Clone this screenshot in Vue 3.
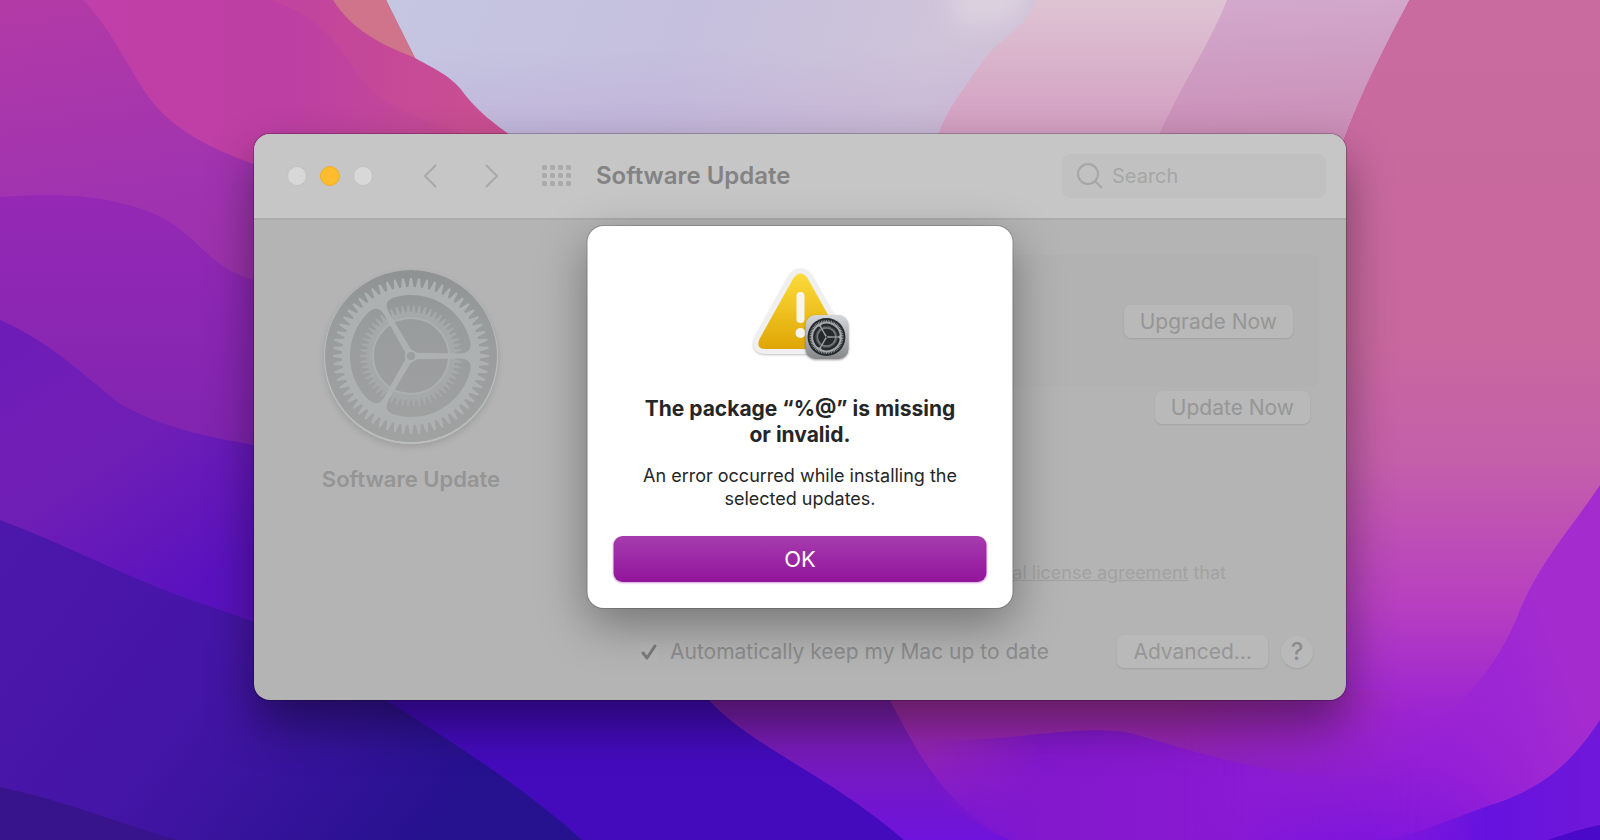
<script setup>
import { ref } from 'vue'

const query = ref('')
const autoUpdate = ref(true)

const polar = (r, deg) => {
  const a = (deg * Math.PI) / 180
  return `${(r * Math.cos(a)).toFixed(2)} ${(r * Math.sin(a)).toFixed(2)}`
}

function toothedRing(count, root, tip) {
  const step = 360 / count
  let d = ''
  for (let i = 0; i < count; i++) {
    const a = i * step
    d += `${i ? 'L' : 'M'}${polar(root, a - step * 0.36)}L${polar(tip, a - step * 0.12)}L${polar(tip, a + step * 0.12)}L${polar(root, a + step * 0.36)}`
  }
  return d + 'Z'
}

const circle = (r) => `M${r} 0A${r} ${r} 0 1 0 ${-r} 0A${r} ${r} 0 1 0 ${r} 0Z`

function opening(rot) {
  const p = (r, a) => polar(r, a + rot)
  return (
    `M${p(7, -28)}L${p(50, -3)}Q${p(61, -3)} ${p(61, -13)}` +
    `A61 61 0 0 0 ${p(61, -107)}Q${p(61, -117)} ${p(50, -117)}L${p(7, -92)}Z`
  )
}

const openings = [0, 120, 240].map(opening).join('')
const wheel = toothedRing(60, 69, 78) + openings
const cog = toothedRing(54, 44, 51) + circle(38)
</script>

<template>
  <div class="desktop">
    <svg class="wallpaper" viewBox="0 0 1600 840" preserveAspectRatio="none" aria-hidden="true">
      <defs>
        <linearGradient id="sky" x1="0" y1="0" x2="1" y2="0.1">
          <stop offset="0" stop-color="#c5c6e2" /><stop offset=".3" stop-color="#c5c0de" />
          <stop offset=".55" stop-color="#cfc4d9" /><stop offset="1" stop-color="#d2b4cf" />
        </linearGradient>
        <linearGradient id="skyLow" x1="0" y1="0" x2="0" y2="1">
          <stop offset=".3" stop-color="#b898cc" stop-opacity="0" /><stop offset="1" stop-color="#b898cc" stop-opacity=".4" />
        </linearGradient>
        <linearGradient id="veil" x1="0" y1="0" x2="0" y2="1">
          <stop offset="0" stop-color="#dec4d3" /><stop offset="1" stop-color="#d29cc0" />
        </linearGradient>
        <linearGradient id="veil2" x1="0.4" y1="0" x2="0.5" y2="1">
          <stop offset="0" stop-color="#d2a9cc" /><stop offset="1" stop-color="#ca8db6" />
        </linearGradient>
        <linearGradient id="rose" x1="0" y1="0" x2="0" y2="840" gradientUnits="userSpaceOnUse">
          <stop offset="0" stop-color="#c96b9f" /><stop offset=".4" stop-color="#c8689e" />
          <stop offset=".55" stop-color="#c45faa" /><stop offset=".72" stop-color="#b73fc0" />
          <stop offset=".85" stop-color="#9c24d2" /><stop offset="1" stop-color="#8417dc" />
        </linearGradient>
        <linearGradient id="magenta" x1="100" y1="60" x2="480" y2="60" gradientUnits="userSpaceOnUse">
          <stop offset="0" stop-color="#c03fa8" /><stop offset=".5" stop-color="#bd3fa3" /><stop offset="1" stop-color="#c74d92" />
        </linearGradient>
        <linearGradient id="plum" x1="0" y1="0" x2="60" y2="460" gradientUnits="userSpaceOnUse">
          <stop offset="0" stop-color="#b23aa6" /><stop offset=".45" stop-color="#a033b0" /><stop offset="1" stop-color="#9430a4" />
        </linearGradient>
        <linearGradient id="violet" x1="0" y1="195" x2="0" y2="450" gradientUnits="userSpaceOnUse">
          <stop offset="0" stop-color="#9529b5" /><stop offset="1" stop-color="#8024b0" />
        </linearGradient>
        <linearGradient id="indigo" x1="0" y1="330" x2="180" y2="600" gradientUnits="userSpaceOnUse">
          <stop offset="0" stop-color="#6e1cb8" /><stop offset=".5" stop-color="#701fb5" /><stop offset="1" stop-color="#5a12bf" />
        </linearGradient>
        <linearGradient id="deep" x1="0" y1="520" x2="420" y2="840" gradientUnits="userSpaceOnUse">
          <stop offset="0" stop-color="#4d17ac" /><stop offset=".5" stop-color="#4415a6" /><stop offset="1" stop-color="#26118f" />
        </linearGradient>
        <linearGradient id="grape" x1="0" y1="700" x2="0" y2="840" gradientUnits="userSpaceOnUse">
          <stop offset="0" stop-color="#7c1fa8" /><stop offset="1" stop-color="#6f13dc" />
        </linearGradient>
        <linearGradient id="orchid" x1="0" y1="700" x2="0" y2="840" gradientUnits="userSpaceOnUse">
          <stop offset="0" stop-color="#a42ea6" /><stop offset=".5" stop-color="#8c20be" /><stop offset="1" stop-color="#7014de" />
        </linearGradient>
        <linearGradient id="wave" x1="930" y1="0" x2="1380" y2="0" gradientUnits="userSpaceOnUse">
          <stop offset="0" stop-color="#8318cc" stop-opacity="0" /><stop offset=".25" stop-color="#8318cc" />
          <stop offset=".7" stop-color="#8a1ad2" /><stop offset="1" stop-color="#8c1ad6" stop-opacity="0" />
        </linearGradient>
        <linearGradient id="fade" x1="1180" y1="0" x2="1420" y2="0" gradientUnits="userSpaceOnUse">
          <stop offset="0" stop-color="#fff" /><stop offset="1" stop-color="#000" />
        </linearGradient>
        <mask id="fadeRight" maskUnits="userSpaceOnUse" x="860" y="680" width="740" height="160">
          <rect x="860" y="680" width="740" height="160" fill="url(#fade)" />
        </mask>
        <linearGradient id="lilac" x1="1400" y1="700" x2="1560" y2="640" gradientUnits="userSpaceOnUse">
          <stop offset="0" stop-color="#981fd6" stop-opacity="0" /><stop offset=".6" stop-color="#9c26d4" />
          <stop offset="1" stop-color="#a42ccf" />
        </linearGradient>
        <linearGradient id="ultra" x1="1370" y1="0" x2="1600" y2="0" gradientUnits="userSpaceOnUse">
          <stop offset="0" stop-color="#6c12e0" stop-opacity="0" /><stop offset=".5" stop-color="#6612de" /><stop offset="1" stop-color="#7018da" />
        </linearGradient>
        <filter id="haze" x="-30%" y="-30%" width="160%" height="160%"><feGaussianBlur stdDeviation="12" /></filter>
      </defs>

      <rect width="1600" height="840" fill="url(#rose)" />
      <path d="M380 0H1409C1385 45 1362 90 1343 140L1300 300H380Z" fill="url(#sky)" />
      <rect x="380" y="0" width="680" height="160" fill="url(#skyLow)" />
      <path d="M950 -20H1040L1015 22L955 28Z" fill="#e0d8e2" opacity=".7" filter="url(#haze)" />
      <path d="M1036 0C1022 34 1000 36 982 62C962 92 944 112 937 140H1170L1230 0Z" fill="url(#veil)" />
      <path d="M1227 0C1208 48 1178 90 1157 140H1343C1362 90 1385 45 1409 0Z" fill="url(#veil2)" />

      <path d="M0 0H386C396 20 406 40 415 58C436 70 452 76 466 96C482 116 496 124 516 140L520 300H0Z" fill="url(#magenta)" />
      <path d="M270 0H333C350 25 380 44 415 58C436 70 452 76 466 96C482 116 496 124 516 140H480C430 122 385 110 362 80C345 58 330 20 270 0Z" fill="#cf5590" opacity=".25" />
      <path d="M333 0H386C396 20 406 40 415 58C380 44 352 30 333 0Z" fill="#d0748b" />
      <path d="M0 0H83C108 26 120 52 140 84C162 122 200 146 260 166V460H0Z" fill="url(#plum)" />
      <path d="M0 197C60 192 110 196 150 212C205 236 205 270 260 281V460H0Z" fill="url(#violet)" />
      <path d="M0 320C50 342 80 372 120 404C160 426 200 436 260 446V640H0Z" fill="url(#indigo)" />
      <path d="M300 640V840H940L740 640Z" fill="#440bbd" />
      <path d="M0 520C60 542 120 574 180 596L260 624L376 694C440 734 520 784 582 840H0Z" fill="url(#deep)" />
      <path d="M0 787C70 802 120 824 178 840H0Z" fill="#38148c" />

      <path d="M700 690C744 745 820 768 904 840H1060L960 690Z" fill="url(#grape)" />
      <g mask="url(#fadeRight)">
        <path d="M884 690C912 738 934 800 1010 840H1600V690Z" fill="url(#orchid)" />
        <path d="M900 738C1000 748 1070 722 1130 733C1200 752 1260 778 1400 780V840H1010C940 810 920 770 900 738Z" fill="url(#wave)" />
      </g>
      <path d="M1600 485C1570 530 1536 566 1516 620C1490 680 1450 720 1380 760V840H1600Z" fill="url(#lilac)" />
      <path d="M1600 720C1570 765 1545 785 1500 802C1450 818 1420 835 1380 840H1600Z" fill="url(#ultra)" />
      <path d="M1600 825C1580 829 1565 834 1548 840H1600Z" fill="#4a08c8" />
    </svg>

    <main class="window">
      <header class="toolbar">
        <div class="lights">
          <button class="light" aria-label="Close"></button>
          <button class="light minimize" aria-label="Minimize"></button>
          <button class="light" aria-label="Zoom"></button>
        </div>
        <nav class="nav">
          <button class="plain" aria-label="Back">
            <svg width="14" height="24" viewBox="0 0 14 24"><path d="M13 1L2 12L13 23" /></svg>
          </button>
          <button class="plain" aria-label="Forward">
            <svg width="14" height="24" viewBox="0 0 14 24"><path d="M1 1L12 12L1 23" /></svg>
          </button>
        </nav>
        <button class="plain all" aria-label="Show all">
          <svg width="29" height="22" viewBox="0 0 29 22">
            <template v-for="row in 3" :key="row">
              <rect v-for="col in 4" :key="col" :x="(col - 1) * 8" :y="(row - 1) * 8" width="5" height="5" rx="1.5" />
            </template>
          </svg>
        </button>
        <h1>Software Update</h1>
        <label class="search">
          <svg width="28" height="28" viewBox="0 0 28 28" aria-hidden="true">
            <circle cx="12" cy="12" r="10" /><path d="M19 19L26 26" />
          </svg>
          <input v-model="query" type="search" placeholder="Search" aria-label="Search" />
        </label>
      </header>

      <div class="content">
        <aside class="sidebar">
          <svg class="gear" width="190" height="190" viewBox="-95 -95 190 190" aria-hidden="true">
            <defs>
              <linearGradient id="dish" x1="0" y1="0" x2="0" y2="1">
                <stop offset="0" stop-color="#8f9292" /><stop offset=".3" stop-color="#999c9c" /><stop offset="1" stop-color="#a0a2a2" />
              </linearGradient>
            </defs>
            <circle r="86" cy="1" fill="none" stroke="#bcbebe" stroke-width="2" />
            <circle r="86" fill="url(#dish)" />
            <path :d="cog" fill="#a6a9a9" fill-rule="evenodd" />
            <circle r="38" fill="none" stroke="#adb0b0" stroke-width="2" />
            <path :d="wheel" fill="#aeb1b1" fill-rule="evenodd" />
            <circle r="4" fill="#9b9e9e" />
          </svg>
          <p>Software Update</p>
        </aside>

        <section class="main">
          <div class="panel"><button class="push">Upgrade Now</button></div>
          <div class="update"><button class="push">Update Now</button></div>
          <p class="license"><a href="#license">original license agreement</a> that</p>
          <footer class="footer">
            <label class="auto">
              <span class="tick">
                <input v-model="autoUpdate" type="checkbox" />
                <svg v-if="autoUpdate" width="18" height="20" viewBox="0 0 18 20"><path d="M3 11L7 16L15 4" /></svg>
              </span>
              Automatically keep my Mac up to date
            </label>
            <button class="push">Advanced…</button>
            <button class="help" aria-label="Help">?</button>
          </footer>
        </section>
      </div>

      <section class="alert" role="alertdialog" aria-labelledby="alert-title" aria-describedby="alert-text">
        <svg class="caution" width="104" height="100" viewBox="-2 0 104 100" aria-hidden="true">
          <defs>
            <linearGradient id="yellow" x1="0" y1="0" x2="0" y2="1">
              <stop offset="0" stop-color="#fbdc3c" /><stop offset=".5" stop-color="#eec11f" /><stop offset="1" stop-color="#dfa605" />
            </linearGradient>
            <linearGradient id="steel" x1="0" y1="0" x2="0" y2="1">
              <stop offset="0" stop-color="#d3d8dd" /><stop offset="1" stop-color="#858788" />
            </linearGradient>
          </defs>
          <path class="rim" d="M43 12Q50 3 57 12L91 73Q95 83 85 83H15Q5 83 9 73Z" />
          <path d="M43 12Q50 3 57 12L91 73Q95 83 85 83H15Q5 83 9 73Z" fill="url(#yellow)" />
          <rect x="46" y="26" width="8" height="31" rx="4" fill="#f7f5ee" />
          <circle cx="50" cy="67" r="5" fill="#f7f5ee" />
          <rect class="badge" x="55" y="49" width="43" height="44" rx="10" fill="url(#steel)" />
          <g transform="translate(76 71) scale(0.22)">
            <circle r="86" fill="#26292b" />
            <path :d="cog" fill="#777b7d" fill-rule="evenodd" />
            <path :d="wheel" fill="#a4a8aa" fill-rule="evenodd" />
            <circle r="5" fill="#333" />
          </g>
        </svg>
        <h2 id="alert-title">The package “%@” is missing<br />or invalid.</h2>
        <p id="alert-text">An error occurred while installing the<br />selected updates.</p>
        <button class="ok">OK</button>
      </section>
    </main>
  </div>
</template>

<style>
body {
  margin: 0;
}
</style>

<style scoped>
.desktop {
  position: relative;
  box-sizing: border-box;
  min-height: 100vh;
  padding: 134px 24px 40px;
  overflow: hidden;
  font-family: Inter, "Liberation Sans", sans-serif;
}
.wallpaper {
  position: absolute;
  inset: 0;
  width: 100%;
  height: 100%;
}
button,
input {
  font: inherit;
  color: inherit;
}
h1,
h2,
p {
  margin: 0;
}
svg {
  display: block;
}
.window {
  position: relative;
  display: flex;
  flex-direction: column;
  max-width: 1092px;
  min-height: 566px;
  margin: 0 auto;
  border-radius: 16px;
  background: #b4b4b4;
  box-shadow: 0 0 0 1px rgba(0, 0, 0, 0.22), 0 24px 48px rgba(0, 0, 0, 0.42);
}
.toolbar {
  display: flex;
  align-items: center;
  box-sizing: border-box;
  height: 86px;
  padding: 0 20px 0 33px;
  border-bottom: 2px solid #acacac;
  border-radius: 16px 16px 0 0;
  background: #c6c6c6;
}
.lights {
  display: flex;
  gap: 13px;
}
.light {
  box-sizing: border-box;
  width: 20px;
  height: 20px;
  padding: 0;
  border: 1px solid #c2c2c2;
  border-radius: 50%;
  background: #d8d8d8;
}
.minimize {
  border-color: #edb033;
  background: #fdbb2e;
}
.nav {
  display: flex;
  gap: 48px;
  margin-left: 50px;
}
.plain {
  padding: 0;
  border: 0;
  background: none;
}
.nav path {
  fill: none;
  stroke: #a8a8a8;
  stroke-width: 2;
}
.all {
  margin-left: 43px;
  fill: #aaa;
}
h1 {
  margin-left: 25px;
  color: #838383;
  font-size: 24px;
  font-weight: 600;
  line-height: 32px;
}
.search {
  display: flex;
  align-items: center;
  gap: 8px;
  box-sizing: border-box;
  width: 264px;
  height: 44px;
  margin-left: auto;
  padding: 0 14px;
  border-radius: 8px;
  background: #c1c1c1;
}
.search svg {
  flex: none;
  fill: none;
  stroke: #a6a6a6;
  stroke-width: 2;
}
.search input {
  flex: 1;
  min-width: 0;
  padding: 0;
  border: 0;
  outline: 0;
  background: none;
  appearance: none;
  font-size: 20px;
}
.search input::placeholder {
  color: #a6a6a6;
  opacity: 1;
}
.content {
  display: flex;
  flex: 1;
}
.sidebar {
  display: flex;
  flex-direction: column;
  align-items: center;
  flex: none;
  gap: 14px;
  width: 314px;
  padding-top: 41px;
  box-sizing: border-box;
  color: #959595;
  font-size: 22px;
  font-weight: 600;
  line-height: 28px;
}
.gear {
  filter: drop-shadow(0 3px 3px rgba(0, 0, 0, 0.12));
}
.main {
  display: flex;
  flex-direction: column;
  flex: 1;
  padding: 35px 28px 32px;
  color: #969696;
  font-size: 21px;
}
.panel {
  display: flex;
  align-items: center;
  justify-content: flex-end;
  height: 132px;
  padding-right: 25px;
  border-radius: 4px;
  background: #b2b2b2;
}
.update {
  display: flex;
  justify-content: flex-end;
  margin-top: 4px;
  padding-right: 8px;
}
.push {
  height: 33px;
  padding: 0 16px;
  border: 0;
  border-radius: 7px;
  background: #b9b9b9;
  box-shadow: 0 1px 2px rgba(0, 0, 0, 0.1);
  line-height: 33px;
}
.license {
  margin: auto 92px 50px auto;
  color: #a2a2a2;
  font-size: 18px;
  line-height: 24px;
}
.license a {
  color: inherit;
}
.footer {
  display: flex;
  align-items: center;
  padding-left: 44px;
}
.auto {
  display: flex;
  align-items: center;
  gap: 12px;
  margin-right: auto;
  color: #8c8c8c;
  line-height: 28px;
}
.tick {
  display: grid;
}
.tick > * {
  grid-area: 1 / 1;
}
.tick input {
  width: 18px;
  height: 20px;
  margin: 0;
  border-radius: 4px;
  background: #b6b6b6;
  appearance: none;
}
.tick svg {
  position: relative;
  pointer-events: none;
  fill: none;
  stroke: #7b7b7b;
  stroke-width: 3;
  stroke-linecap: round;
  stroke-linejoin: round;
}
.help {
  width: 32px;
  height: 32px;
  margin: 0 5px 0 13px;
  padding: 0;
  border: 0;
  border-radius: 50%;
  background: #b9b9b9;
  box-shadow: 0 1px 2px rgba(0, 0, 0, 0.1);
  color: #8c8c8c;
  font-size: 24px;
  font-weight: 500;
  line-height: 32px;
}
.alert {
  position: absolute;
  top: 92px;
  left: 50%;
  display: flex;
  flex-direction: column;
  align-items: center;
  box-sizing: border-box;
  width: 425px;
  padding: 40px 26px 26px;
  transform: translateX(-50%);
  border-radius: 16px;
  background: #fff;
  box-shadow: 0 0 0 1px rgba(0, 0, 0, 0.16), 0 16px 48px rgba(0, 0, 0, 0.36);
  color: #262626;
  text-align: center;
}
.rim {
  fill: #eee;
  stroke: #f0f0f0;
  stroke-width: 10;
  stroke-linejoin: round;
  filter: drop-shadow(0 1px 1px rgba(0, 0, 0, 0.25));
}
.badge {
  filter: drop-shadow(0 1px 1px rgba(0, 0, 0, 0.4));
}
h2 {
  margin-top: 30px;
  font-size: 21px;
  font-weight: 700;
  line-height: 26px;
}
.alert p {
  margin-top: 16px;
  font-size: 18px;
  line-height: 23px;
}
.ok {
  width: 100%;
  height: 46px;
  margin-top: 26px;
  padding: 0;
  border: 0;
  border-radius: 9px;
  background: linear-gradient(#a63cae, #92149c);
  box-shadow: 0 1px 2px rgba(146, 20, 156, 0.4);
  color: #fff;
  font-size: 22px;
}
</style>
